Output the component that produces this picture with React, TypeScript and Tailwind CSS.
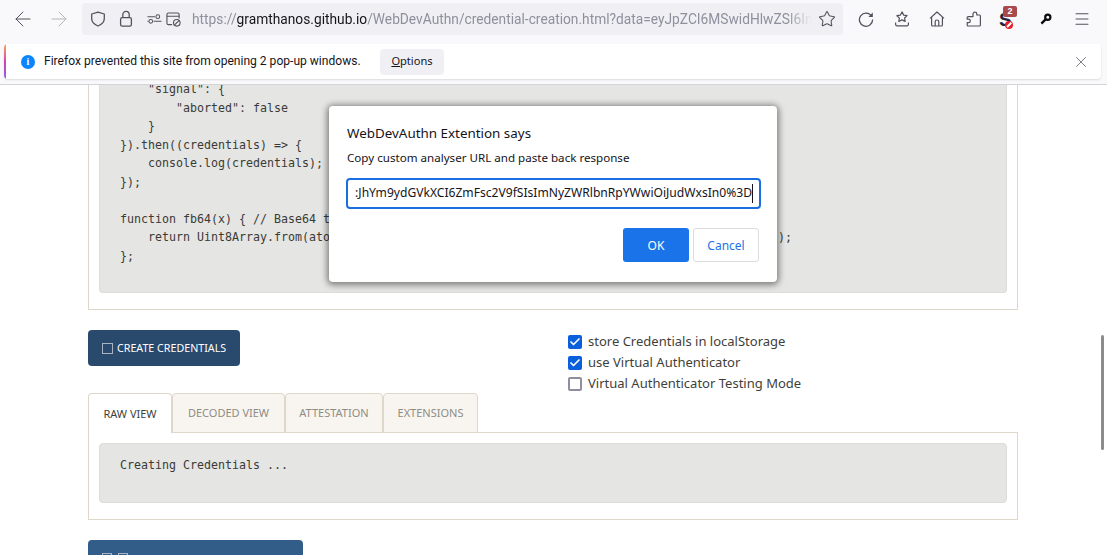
import { ArrowLeft, ArrowRight, Check, Menu, Star, X } from "lucide-react";

const sans = "font-['Noto_Sans','Open_Sans',sans-serif]";
const roboto = "font-['Roboto','Noto_Sans',sans-serif]";

const codeLines = [
  '    "signal": {',
  '        "aborted": false',
  "    }",
  "}).then((credentials) => {",
  "    console.log(credentials);",
  "});",
  "",
  "function fb64(x) { // Base64 to Uint8Array",
  "    return Uint8Array.from(atob(x.replace(/_/g, '/').replace(/-/g, '+')), c => c.charCodeAt(0));",
  "};",
];

const options = [
  { label: "store Credentials in localStorage", checked: true },
  { label: "use Virtual Authenticator", checked: true },
  { label: "Virtual Authenticator Testing Mode", checked: false },
];

const tabs = [
  { label: "RAW VIEW", width: "w-[84px]", active: true },
  { label: "DECODED VIEW", width: "w-[113px]", active: false },
  { label: "ATTESTATION", width: "w-[98px]", active: false },
  { label: "EXTENSIONS", width: "w-[95px]", active: false },
];

function Shield() {
  return (
    <svg width="16" height="16" viewBox="0 0 16 16" fill="none" stroke="#52525e" strokeWidth="1.3">
      <path d="M8 1.2 14.3 3v4.6c0 3.4-2.6 6-6.3 7.4C4.3 13.6 1.7 11 1.7 7.6V3z" strokeLinejoin="round" />
    </svg>
  );
}

function Lock() {
  return (
    <svg width="16" height="18" viewBox="0 0 16 18" fill="none" stroke="#52525e" strokeWidth="1.3">
      <rect x="2.6" y="7.6" width="10.8" height="8.6" rx="1.6" />
      <path d="M4.8 7.5V4.6a3.2 3.2 0 0 1 6.4 0v2.9" />
    </svg>
  );
}

function Permissions() {
  return (
    <svg width="15" height="12" viewBox="0 0 16 12" fill="none" stroke="#52525e" strokeWidth="1.1">
      <path d="M0.5 3.5H8.5M0.5 8.5h1M7 8.5h8.5" />
      <circle cx="11.5" cy="3.5" r="2" />
      <circle cx="4" cy="8.5" r="2" />
    </svg>
  );
}

function PopupBlocked() {
  return (
    <svg width="15" height="15" viewBox="0 0 16 16" fill="none" stroke="#52525e" strokeWidth="1.2">
      <path d="M6.5 13.5H2.6a1.6 1.6 0 0 1-1.6-1.6V2.6A1.6 1.6 0 0 1 2.6 1h9.8A1.6 1.6 0 0 1 14 2.6V7" />
      <path d="M1 4.5h13" />
      <circle cx="11.5" cy="11.5" r="3.5" />
      <path d="m9.2 13.8 4.6-4.6" />
    </svg>
  );
}

function Reload() {
  return (
    <svg width="16" height="16" viewBox="0 0 16 16" fill="none" stroke="#52525e" strokeWidth="1.3">
      <path d="M13.6 5.2A6.6 6.6 0 1 0 14.6 8.6" />
      <path d="M14.8 1.4v4.5h-4.5z" fill="#52525e" stroke="none" />
    </svg>
  );
}

function SaveStar() {
  return (
    <svg width="16" height="16" viewBox="0 0 16 16" fill="none" stroke="#52525e" strokeWidth="1.2">
      <path d="m8 .9 1.7 3.2 3.4.5-2.5 2.4.6 3.4L8 8.9l-3.2 1.6.6-3.4-2.5-2.4 3.4-.5z" strokeLinejoin="round" />
      <path d="M1.6 11.5v1.7a1.6 1.6 0 0 0 1.6 1.6h9.6a1.6 1.6 0 0 0 1.6-1.6v-1.7" />
    </svg>
  );
}

function Home() {
  return (
    <svg width="16" height="16" viewBox="0 0 16 16" fill="none" stroke="#52525e" strokeWidth="1.2">
      <path d="M1 7.4 8 1l7 6.4M2.6 6v8a1 1 0 0 0 1 1h8.8a1 1 0 0 0 1-1V6" strokeLinejoin="round" />
      <path d="M6.2 15v-4.2a1.8 1.8 0 0 1 3.6 0V15" />
    </svg>
  );
}

function Extensions() {
  return (
    <svg width="16" height="16" viewBox="0 0 16 16" fill="none" stroke="#52525e" strokeWidth="1.2">
      <path
        d="M9 1.2a1.8 1.8 0 0 1 1.8 1.8v1h2.6a1 1 0 0 1 1 1v9a1 1 0 0 1-1 1H2.2a1 1 0 0 1-1-1v-2.4h1.4a1.7 1.7 0 0 0 0-3.4H1.2V6.6a1 1 0 0 1 1-1H7V3A1.8 1.8 0 0 1 9 1.2z"
        strokeLinejoin="round"
      />
    </svg>
  );
}

function StackIcon() {
  return (
    <div className="relative w-[20px] h-[24px]">
      <span className="absolute left-[-1px] top-[3px] text-[19px] leading-[19px] font-bold text-[#20233a] font-['Liberation_Sans',sans-serif]">S</span>
      <span className="absolute left-[3px] top-[-1px] w-[14px] h-[11px] rounded-[2px] bg-[#a8494c] text-white text-[9px] leading-[11px] font-bold text-center font-['Liberation_Sans',sans-serif]">2</span>
      <span className="absolute left-[5px] top-[14px] w-[8px] h-[8px] rounded-full bg-[#e4202e] flex items-center justify-center">
        <span className="w-[6px] h-[1.5px] bg-white -rotate-45" />
      </span>
    </div>
  );
}

function KeyIcon() {
  return (
    <svg width="12" height="12" viewBox="0 0 12 12" fill="none">
      <circle cx="7.8" cy="4.2" r="2.6" stroke="#0c0c0d" strokeWidth="2.2" />
      <path d="M5.8 6.2 1.4 10.6" stroke="#0c0c0d" strokeWidth="2.4" />
    </svg>
  );
}

function ToolbarSlot({ width, children }: { width: string; children: React.ReactNode }) {
  return <div className={`${width} flex items-center justify-center shrink-0`}>{children}</div>;
}

function Toolbar() {
  return (
    <div className="h-[44px] bg-[#f9f9fb] flex items-center pb-[6px] shrink-0">
      <ToolbarSlot width="w-[46px]">
        <ArrowLeft size={24} strokeWidth={1} className="text-[#52525e]" />
      </ToolbarSlot>
      <ToolbarSlot width="w-[26px]">
        <ArrowRight size={24} strokeWidth={1} className="text-[#b5b5ba]" />
      </ToolbarSlot>
      <div className="ml-[10px] w-[761px] h-[32px] bg-[#f0f0f4] rounded-[4px] flex items-center shrink-0 overflow-hidden">
        <div className="w-[8px] shrink-0" />
        <Shield />
        <div className="w-[12px] shrink-0" />
        <Lock />
        <div className="w-[13px] shrink-0" />
        <Permissions />
        <div className="w-[4px] shrink-0" />
        <PopupBlocked />
        <p className={`ml-[11px] w-[620px] shrink-0 overflow-hidden whitespace-nowrap text-[13.75px] text-[#8f8f9d] [mask-image:linear-gradient(to_right,black_96%,transparent)] ${roboto}`}>
          https://<span className="text-[#15141a]">gramthanos.github.io</span>
          /WebDevAuthn/credential-creation.html?data=eyJpZCI6MSwidHlwZSI6In
        </p>
        <div className="flex-1" />
        <Star size={18} strokeWidth={1.4} className="text-[#52525e] mr-[7px]" />
      </div>
      <ToolbarSlot width="w-[46px]"><Reload /></ToolbarSlot>
      <ToolbarSlot width="w-[26px]"><SaveStar /></ToolbarSlot>
      <ToolbarSlot width="w-[44px]"><Home /></ToolbarSlot>
      <ToolbarSlot width="w-[30px]"><Extensions /></ToolbarSlot>
      <ToolbarSlot width="w-[42px]"><StackIcon /></ToolbarSlot>
      <ToolbarSlot width="w-[30px]"><KeyIcon /></ToolbarSlot>
      <ToolbarSlot width="w-[42px]">
        <Menu size={18} strokeWidth={1.4} className="text-[#52525e]" />
      </ToolbarSlot>
    </div>
  );
}

function NotificationBar() {
  return (
    <div className="h-[41px] bg-[#f9f9fb] border-b border-[#d4d4d8] pl-[4px] pr-[6px] pb-[5px] shrink-0">
      <div className="h-[35px] bg-white rounded-[4px] shadow-[0_1px_2px_rgba(0,0,0,0.12)] flex items-center overflow-hidden">
        <div className="w-[2px] h-full bg-gradient-to-b from-[#ffa436] via-[#d23fa8] to-[#8f5cf0] shrink-0" />
        <div className="ml-[15px] w-[14px] h-[14px] rounded-full bg-[#0a84ff] flex items-center justify-center text-white text-[10px] font-bold leading-none font-['Liberation_Serif',serif] shrink-0">
          i
        </div>
        <p className={`ml-[9px] w-[336px] shrink-0 whitespace-nowrap text-[12.07px] text-[#15141a] ${roboto}`}>
          Firefox prevented this site from opening 2 pop-up windows.
        </p>
        <button className={`h-[26px] w-[64px] rounded-[4px] bg-[#f0f0f4] text-[11.1px] text-[#15141a] shrink-0 ${sans}`}>
          <span className="underline">O</span>ptions
        </button>
        <div className="flex-1" />
        <X size={18} strokeWidth={1} className="text-[#52525e] mr-[11px]" />
      </div>
    </div>
  );
}

function TopPanel() {
  return (
    <div className="h-[225px] border-x border-b border-[#dfd7ca] px-[10px] pb-[16px]">
      <div className="h-full bg-[#e5e5e3] border-x border-b border-[#dcdcda] rounded-b-[4px] pl-[20px] overflow-hidden">
        <pre className="-mt-[5px] text-[11.64px] leading-[18.5px] text-[#3a3b36] font-['DejaVu_Sans_Mono',monospace]">
          {codeLines.join("\n")}
        </pre>
      </div>
    </div>
  );
}

function OptionRow({ label, checked }: { label: string; checked: boolean }) {
  return (
    <div className={`h-[21px] flex items-center gap-[6px] text-[13.03px] text-[#3e3f3a] ${sans}`}>
      {checked ? (
        <span className="w-[14px] h-[14px] rounded-[2px] bg-[#0a60dc] flex items-center justify-center">
          <Check size={12} strokeWidth={3.5} className="text-white" />
        </span>
      ) : (
        <span className="w-[14px] h-[14px] rounded-[2px] border-2 border-[#8f8f9d] bg-white" />
      )}
      {label}
    </div>
  );
}

function ActionRow() {
  return (
    <div className="mt-[20px] h-[63px] flex items-start">
      <div className="w-[480px] shrink-0">
        <button className={`h-[36px] w-[152px] rounded-[4px] bg-[#29496d] flex items-center pl-[14px] gap-[4px] pt-[1px] text-white text-[10.7px] ${sans}`}>
          <span className="w-[11px] h-[11px] border border-[#a8b4c4]" />
          CREATE CREDENTIALS
        </button>
      </div>
      <div className="pt-[1px]">
        {options.map((o) => (
          <OptionRow key={o.label} label={o.label} checked={o.checked} />
        ))}
      </div>
    </div>
  );
}

function TabsPanel() {
  return (
    <div>
      <div className="flex h-[40px]">
        {tabs.map((tab) => (
          <div
            key={tab.label}
            className={`${tab.width} flex items-center justify-center pt-[1px] rounded-t-[4px] border-x border-t border-[#dfd7ca] text-[11px] ${sans} ${
              tab.active
                ? "bg-white text-[#3e3f3a] relative z-10 -mb-[1px] h-[40px]"
                : "bg-[#f8f5f0] text-[#8e8c84] border-b"
            }`}
          >
            {tab.label}
          </div>
        ))}
        <div className="flex-1 border-b border-[#dfd7ca]" />
      </div>
      <div className="h-[88px] -mt-[1px] border-x border-b border-t border-[#dfd7ca] px-[10px] pt-[10px]">
        <div className="h-[60px] bg-[#e5e5e3] border border-[#dcdcda] rounded-[4px] pl-[20px] pt-[12px]">
          <pre className="text-[11.64px] leading-[18.5px] text-[#3a3b36] font-['DejaVu_Sans_Mono',monospace]">
            Creating Credentials ...
          </pre>
        </div>
      </div>
    </div>
  );
}

function PromptDialog() {
  return (
    <div className={`absolute left-[329px] top-[106px] w-[448px] h-[176px] bg-white rounded-[4px] shadow-[0_1px_6px_2px_rgba(0,0,0,0.45)] pl-[18px] pr-[18px] pt-[17px] ${sans}`}>
      <p className="text-[13.4px] leading-[20px] text-[#15141a]">WebDevAuthn Extention says</p>
      <p className="mt-[6px] text-[11.6px] leading-[18px] text-[#15141a]">Copy custom analyser URL and paste back response</p>
      <div className="mt-[11px] -mx-[1px] h-[31px] w-[415px] border-2 border-[#1a6fe0] rounded-[4px] flex items-center justify-end overflow-hidden pr-[6px]">
        <span className="whitespace-nowrap text-[12.1px] text-[#15141a] border-r border-[#15141a]">
          :JhYm9ydGVkXCI6ZmFsc2V9fSIsImNyZWRlbnRpYWwiOiJudWxsIn0%3D
        </span>
      </div>
      <div className="mt-[19px] flex justify-end gap-[4px]">
        <button className="w-[66px] h-[34px] pt-[1px] rounded-[3px] bg-[#1a73e8] text-white text-[12px]">OK</button>
        <button className="w-[66px] h-[34px] pt-[1px] rounded-[3px] bg-white border border-[#dadce0] text-[#1a73e8] text-[12px]">Cancel</button>
      </div>
    </div>
  );
}

export default function App() {
  return (
    <div className="relative w-[1107px] h-[555px] overflow-hidden bg-white flex flex-col">
      <Toolbar />
      <NotificationBar />
      <main className="flex-1 overflow-hidden px-[88px] w-[1018px] box-content">
        <div className="w-[930px]">
          <TopPanel />
          <ActionRow />
          <TabsPanel />
          <button className="mt-[20px] h-[36px] w-[215px] rounded-t-[4px] bg-[#325d88] flex items-start pl-[14px] pt-[13px] gap-[6px]">
            <span className="w-[10px] h-[10px] border border-[#a8b4c4]" />
            <span className="w-[10px] h-[10px] border border-[#a8b4c4]" />
          </button>
        </div>
      </main>
      {/* overlay scrollbar */}
      <div className="absolute left-[1101px] top-[335px] w-[3px] h-[115px] rounded-full bg-[#8c8c8c]" />
      <PromptDialog />
    </div>
  );
}
